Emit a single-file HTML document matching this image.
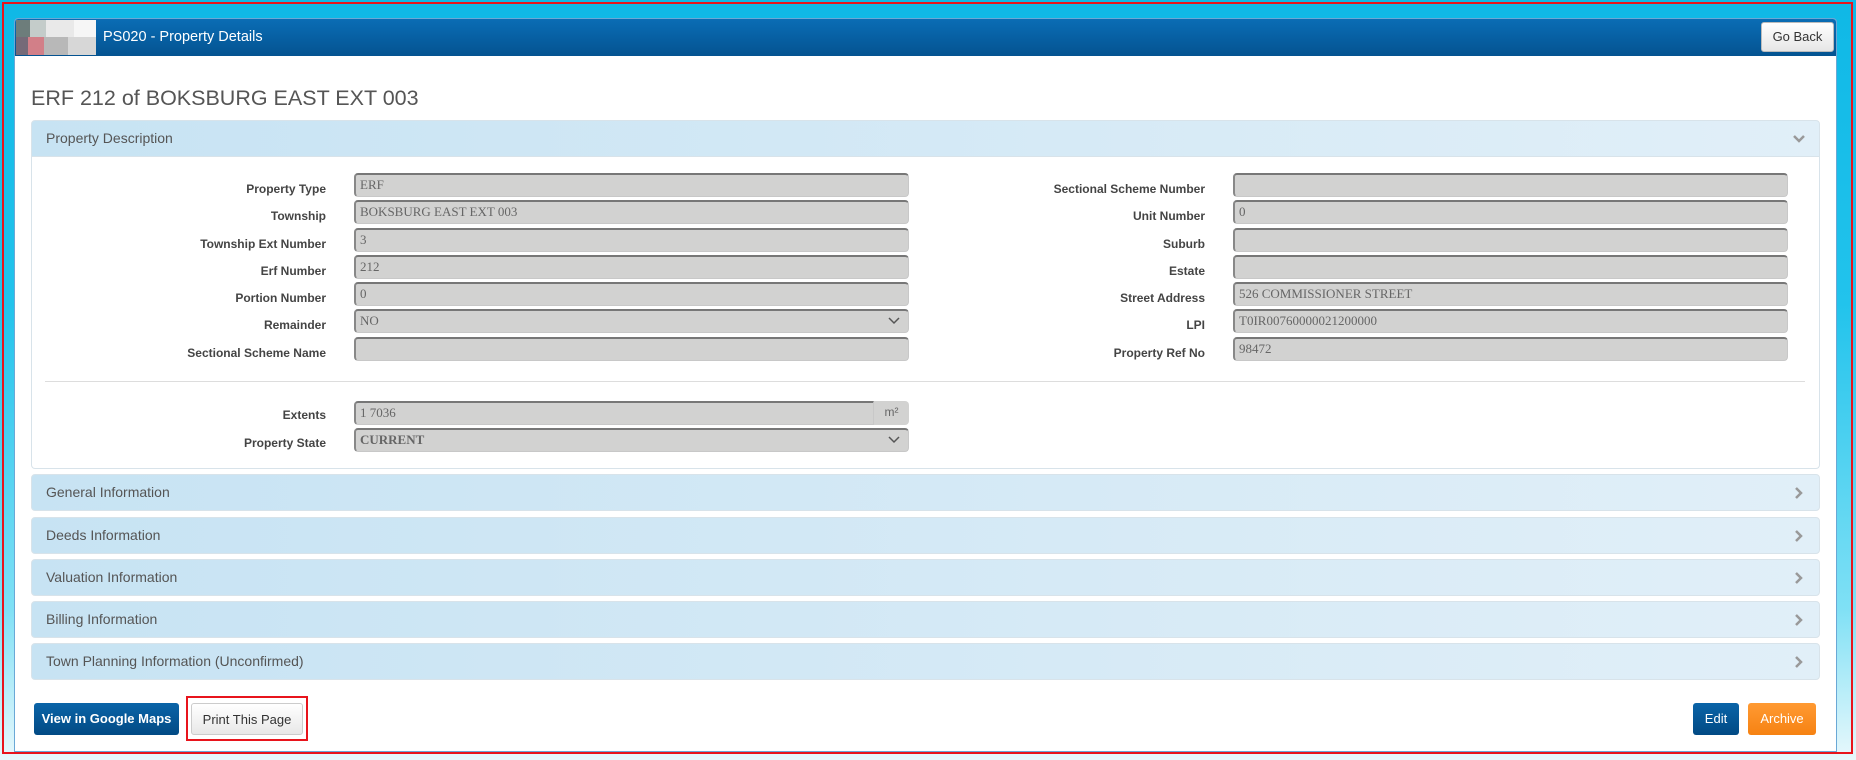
<!DOCTYPE html>
<html><head><meta charset="utf-8"><style>
*{box-sizing:border-box;margin:0;padding:0}
body{width:1856px;height:760px;overflow:hidden;background:#fff;font-family:"Liberation Sans",Arial,sans-serif;position:relative}
.bg{position:absolute;left:0;top:0;width:1856px;height:760px;background:linear-gradient(180deg,#0fb8e6 0%,#22c3ec 40%,#7fe0f5 80%,#e8f8fc 100%)}
.red{position:absolute;left:2px;top:2px;width:1851px;height:752px;border:2px solid #e8141c;z-index:10;pointer-events:none}
.panel{position:absolute;left:14px;top:18px;width:1823px;height:734px;background:#fff;border:1px solid #6aa8d6;border-radius:4px 4px 0 0}
.hdr{position:absolute;left:0;top:0;width:100%;height:37px;background:linear-gradient(#0a6db5,#045391);border-radius:3px 3px 0 0}
.logo{position:absolute;left:1px;top:1px;width:80px;height:35px;background:linear-gradient(90deg,#6d7d7b 0 14px,#c4ccca 14px 30px,#e9e9e9 30px 58px,#f6f6f6 58px);}
.logo:after{content:"";position:absolute;left:0;top:17px;width:80px;height:18px;background:linear-gradient(90deg,#766a78 0 12px,#d27f88 12px 28px,#b8b8b8 28px 52px,#d7d7d7 52px)}
.htxt{position:absolute;left:88px;top:10px;color:#fff;font-size:14.5px}
.goback{position:absolute;left:1746px;top:3px;width:73px;height:30px;background:linear-gradient(#fff,#e6e6e6);border:1px solid #bbb;border-radius:3px;font-size:13px;color:#333;text-align:center;line-height:28px}
h1{position:absolute;left:31px;top:86px;font-weight:normal;font-size:21.5px;color:#555}
.sec{position:absolute;left:31px;width:1789px;height:37px;background:linear-gradient(90deg,#c7e3f3,#e1eff8);border:1px solid #d8e3ea;border-radius:4px;font-size:14px;color:#555;padding-left:14px;line-height:35px}
.chev{position:absolute;right:14px;top:12px;width:12px;height:12px}
.body{position:absolute;left:31px;top:156px;width:1789px;height:313px;border:1px solid #d8e3ea;border-top:none;border-radius:0 0 4px 4px}
.lbl{position:absolute;font-size:12px;font-weight:bold;color:#444;text-align:right;width:300px}
.inp{position:absolute;height:24px;background:#d2d2d1;border:1px solid #c8c8c8;border-top:2px solid #777;border-left:2px solid #888;border-radius:4px;font-family:"Liberation Serif",serif;font-size:13px;color:#666;padding-left:4px;line-height:20px}
.dd{position:absolute;right:8px;top:5px;width:12px;height:10px}
.btn{position:absolute;top:703px;height:32px;border-radius:3px;font-size:13px;font-weight:bold;text-align:center;line-height:32px}
</style></head><body>
<div class="bg"></div>
<div class="panel">
<div class="hdr"><div class="logo"></div><div class="htxt">PS020 - Property Details</div><div class="goback">Go Back</div></div>
</div>
<h1>ERF 212 of BOKSBURG EAST EXT 003</h1>
<div class="sec" style="top:120px;border-radius:4px 4px 0 0">Property Description<svg class="chev" viewBox="0 0 12 12"><path d="M1 3l5 5 5-5" fill="none" stroke="#999" stroke-width="2.5"/></svg></div>
<div class="body"></div>
<div style="position:absolute;left:45px;top:381px;width:1760px;height:1px;background:#ddd"></div>

<div class="lbl" style="left:26px;top:182px">Property Type</div><div class="inp" style="left:354px;top:173px;width:555px">ERF</div>
<div class="lbl" style="left:26px;top:209px">Township</div><div class="inp" style="left:354px;top:200px;width:555px">BOKSBURG EAST EXT 003</div>
<div class="lbl" style="left:26px;top:237px">Township Ext Number</div><div class="inp" style="left:354px;top:228px;width:555px">3</div>
<div class="lbl" style="left:26px;top:264px">Erf Number</div><div class="inp" style="left:354px;top:255px;width:555px">212</div>
<div class="lbl" style="left:26px;top:291px">Portion Number</div><div class="inp" style="left:354px;top:282px;width:555px">0</div>
<div class="lbl" style="left:26px;top:318px">Remainder</div><div class="inp" style="left:354px;top:309px;width:555px">NO<svg class="dd" viewBox="0 0 12 10"><path d="M1 2l5 5 5-5" fill="none" stroke="#555" stroke-width="1.5"/></svg></div>
<div class="lbl" style="left:26px;top:346px">Sectional Scheme Name</div><div class="inp" style="left:354px;top:337px;width:555px"></div>

<div class="lbl" style="left:905px;top:182px">Sectional Scheme Number</div><div class="inp" style="left:1233px;top:173px;width:555px"></div>
<div class="lbl" style="left:905px;top:209px">Unit Number</div><div class="inp" style="left:1233px;top:200px;width:555px">0</div>
<div class="lbl" style="left:905px;top:237px">Suburb</div><div class="inp" style="left:1233px;top:228px;width:555px"></div>
<div class="lbl" style="left:905px;top:264px">Estate</div><div class="inp" style="left:1233px;top:255px;width:555px"></div>
<div class="lbl" style="left:905px;top:291px">Street Address</div><div class="inp" style="left:1233px;top:282px;width:555px">526 COMMISSIONER STREET</div>
<div class="lbl" style="left:905px;top:318px">LPI</div><div class="inp" style="left:1233px;top:309px;width:555px">T0IR00760000021200000</div>
<div class="lbl" style="left:905px;top:346px">Property Ref No</div><div class="inp" style="left:1233px;top:337px;width:555px">98472</div>

<div class="lbl" style="left:26px;top:408px">Extents</div><div class="inp" style="left:354px;top:401px;width:520px;border-radius:4px 0 0 4px">1 7036</div>
<div style="position:absolute;left:874px;top:401px;width:35px;height:24px;background:#d2d2d1;border-radius:0 4px 4px 0;font-size:12px;color:#666;text-align:center;line-height:22px">m²</div>
<div class="lbl" style="left:26px;top:436px">Property State</div><div class="inp" style="left:354px;top:428px;width:555px;font-weight:bold">CURRENT<svg class="dd" viewBox="0 0 12 10"><path d="M1 2l5 5 5-5" fill="none" stroke="#555" stroke-width="1.5"/></svg></div>

<div class="sec" style="top:474px">General Information<svg class="chev" viewBox="0 0 12 12"><path d="M3 1l5 5-5 5" fill="none" stroke="#999" stroke-width="2.5"/></svg></div>
<div class="sec" style="top:517px">Deeds Information<svg class="chev" viewBox="0 0 12 12"><path d="M3 1l5 5-5 5" fill="none" stroke="#999" stroke-width="2.5"/></svg></div>
<div class="sec" style="top:559px">Valuation Information<svg class="chev" viewBox="0 0 12 12"><path d="M3 1l5 5-5 5" fill="none" stroke="#999" stroke-width="2.5"/></svg></div>
<div class="sec" style="top:601px">Billing Information<svg class="chev" viewBox="0 0 12 12"><path d="M3 1l5 5-5 5" fill="none" stroke="#999" stroke-width="2.5"/></svg></div>
<div class="sec" style="top:643px">Town Planning Information (Unconfirmed)<svg class="chev" viewBox="0 0 12 12"><path d="M3 1l5 5-5 5" fill="none" stroke="#999" stroke-width="2.5"/></svg></div>

<div class="btn" style="left:34px;width:145px;background:linear-gradient(#0a64a8,#024a84);color:#fff">View in Google Maps</div>
<div class="btn" style="left:191px;width:112px;background:linear-gradient(#fff,#e8e8e8);border:1px solid #ccc;color:#333;font-weight:normal">Print This Page</div>
<div style="position:absolute;left:186px;top:696px;width:122px;height:45px;border:2px solid #e8141c"></div>
<div class="btn" style="left:1693px;width:46px;background:linear-gradient(#0a64a8,#024a84);color:#fff;font-weight:normal">Edit</div>
<div class="btn" style="left:1748px;width:68px;background:linear-gradient(#ff9a33,#f68212);color:#fff;font-weight:normal">Archive</div>
<div class="red"></div>
</body></html>
